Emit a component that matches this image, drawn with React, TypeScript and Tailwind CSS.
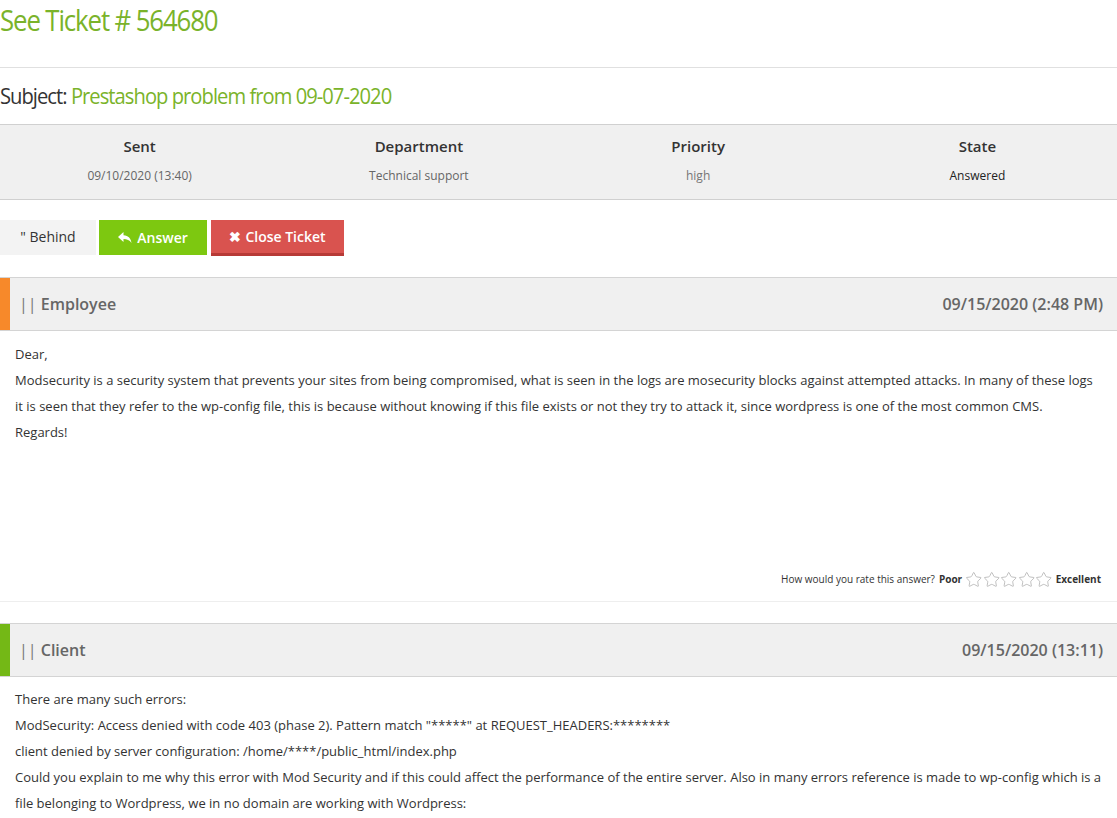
import { Star } from "lucide-react";

const info = [
  { label: "Sent", value: "09/10/2020 (13:40)", color: "text-[#666]" },
  { label: "Department", value: "Technical support", color: "text-[#666]" },
  { label: "Priority", value: "high", color: "text-[#777]" },
  { label: "State", value: "Answered", color: "text-[#222]" },
];

function MessageHeader({ who, date, bar }: { who: string; date: string; bar: string }) {
  return (
    <div className="flex h-[54px] items-stretch border-y border-[#d4d4d4] bg-[#f0f0f0]">
      <div className={`w-[10px] ${bar}`}></div>
      <div className="flex flex-1 items-center justify-between pl-[9px] pr-[14px]">
        <span className="text-[16px] font-semibold text-[#666]">
          <span className="font-normal text-[#777]">||</span> {who}
        </span>
        <span className="text-[16px] font-semibold text-[#666]">{date}</span>
      </div>
    </div>
  );
}

export default function App() {
  return (
    <div className="min-h-screen bg-white font-['Open_Sans',sans-serif] text-[#333]">
      {/* title */}
      <h1 className="h-[39px] font-['Open_Sans',sans-serif] text-[30px] font-normal leading-[40px] tracking-[-1.3px] text-[#7ab32a] [transform:scaleX(0.86)] origin-left whitespace-nowrap">
        See Ticket # 564680
      </h1>
      <div className="mt-[28px] border-t border-[#e0e0e0]"></div>

      {/* subject */}
      <div className="mt-[15px] h-[26px] whitespace-nowrap text-[21px] font-medium leading-[26px] tracking-[-1px] [transform:scaleX(0.96)] origin-left">
        <span className="text-[#333]">Subject:</span>{" "}
        <span className="text-[#7ab32a]">Prestashop problem from 09-07-2020</span>
      </div>

      {/* info table */}
      <div className="mt-[15px] grid h-[76px] grid-cols-4 border-y border-[#d0d0d0] bg-[#f0f0f0]">
        {info.map((i) => (
          <div key={i.label} className="flex flex-col items-center pt-[10px]">
            <span className="text-[15px] font-semibold leading-[22px] text-[#333]">{i.label}</span>
            <span className={`mt-[10px] text-[12px] leading-[18px] ${i.color}`}>{i.value}</span>
          </div>
        ))}
      </div>

      {/* buttons */}
      <div className="mt-[20px] flex gap-[3px]">
        <button className="h-[35px] w-[96px] bg-[#f3f3f3] pb-[3px] text-[14px] text-[#333]">" Behind</button>
        <button className="flex h-[35px] w-[108px] items-center justify-center gap-[5px] bg-[#7dc810] text-[14px] font-semibold text-white">
          <svg width="14" height="12" viewBox="0 0 14 12" fill="white">
            <path d="M5.5 0 L0 5 L5.5 10 L5.5 7 C9 7 11.5 8 13.5 11 C13 6.5 10.5 3.5 5.5 3.2 Z" />
          </svg>
          Answer
        </button>
        <button className="ml-[1px] flex h-[36px] w-[133px] items-center justify-center gap-[4px] border-b-[3px] border-[#b73a36] bg-[#d9534f] text-[14px] font-semibold text-white">
          <span className="text-[14px] font-bold leading-none">✖</span>
          Close Ticket
        </button>
      </div>

      {/* employee message */}
      <div className="mt-[21px]">
        <MessageHeader who="Employee" date="09/15/2020 (2:48 PM)" bar="bg-[#f7892a]" />
        <div className="px-[15px] pt-[10px] text-[13px] leading-[26px] text-[#333]">
          <p>Dear,</p>
          <p>
            Modsecurity is a security system that prevents your sites from being compromised, what is seen in the logs
            are mosecurity blocks against attempted attacks. In many of these logs it is seen that they refer to the
            wp-config file, this is because without knowing if this file exists or not they try to attack it, since
            wordpress is one of the most common CMS.
          </p>
          <p>Regards!</p>
        </div>
        <div className="mt-[126px] flex items-center justify-end pr-[16px] pb-[12px] text-[10px] text-[#333]">
          <span>How would you rate this answer?</span>
          <span className="ml-[4px] font-bold">Poor</span>
          <span className="mx-[3px] flex">
            {[0, 1, 2, 3, 4].map((k) => (
              <Star key={k} size={17.5} strokeWidth={1} className="text-[#aaa]" />
            ))}
          </span>
          <span className="font-bold">Excellent</span>
        </div>
        <div className="border-t border-[#eeeeee]"></div>
      </div>

      {/* client message */}
      <div className="mt-[21px]">
        <MessageHeader who="Client" date="09/15/2020 (13:11)" bar="bg-[#74b816]" />
        <div className="px-[15px] pt-[9px] text-[13px] leading-[26px] text-[#333]">
          <p>There are many such errors:</p>
          <p>ModSecurity: Access denied with code 403 (phase 2). Pattern match "*****" at REQUEST_HEADERS:********</p>
          <p>client denied by server configuration: /home/****/public_html/index.php</p>
          <p>
            Could you explain to me why this error with Mod Security and if this could affect the performance of the
            entire server. Also in many errors reference is made to wp-config which is a file belonging to Wordpress, we
            in no domain are working with Wordpress:
          </p>
        </div>
      </div>
    </div>
  );
}
